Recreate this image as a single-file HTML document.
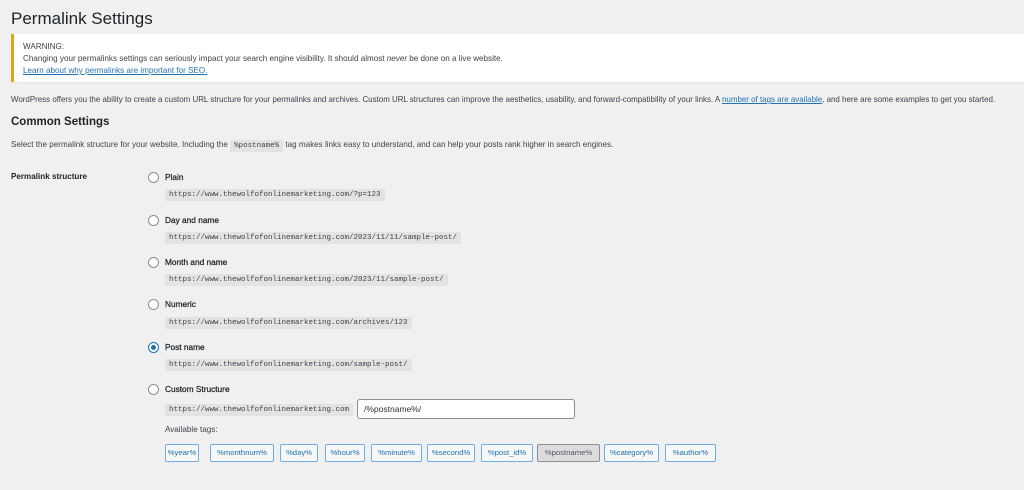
<!DOCTYPE html>
<html><head><style>
body{margin:0;width:1024px;height:490px;background:#f0f0f1;font-family:"Liberation Sans",sans-serif;color:#3c434a;position:relative;overflow:hidden;font-size:8.1px}
.a{position:absolute;white-space:nowrap}
h1{position:absolute;left:11px;top:9px;margin:0;font-size:17px;font-weight:400;color:#1d2327}
.notice{position:absolute;left:11px;top:34px;width:1013px;height:48px;background:#fff;border-left:3px solid #dba617;box-sizing:border-box;box-shadow:0 1px 1px rgba(0,0,0,.06)}
a{color:#2271b1;text-decoration:underline}
code{font-family:"Liberation Mono",monospace;background:#e3e3e4;padding:2px 4px;font-size:7.5px;color:#3c434a}
.r{position:absolute;left:148px;width:9px;height:9px;border:1px solid #8c8f94;border-radius:50%;background:#fff}
.r.on{border-color:#2271b1}
.r.on:after{content:"";position:absolute;left:2px;top:2px;width:5px;height:5px;border-radius:50%;background:#2271b1}
.lab{position:absolute;left:165px;color:#1d2327;font-size:8.3px;-webkit-text-stroke:0.25px #1d2327}
.btn{position:absolute;top:444px;height:18px;border:1px solid #72aee6;background:#f6f7f7;color:#2271b1;box-sizing:border-box;font-size:7.7px;line-height:16px;text-align:center;border-radius:2px}
</style></head><body>
<h1>Permalink Settings</h1>
<div class="notice"></div>
<div class="a" style="left:23px;top:42px;color:#3c434a">WARNING:</div>
<div class="a" style="left:23px;top:54px">Changing your permalinks settings can seriously impact your search engine visibility. It should almost <i>never</i> be done on a live website.</div>
<div class="a" style="left:23px;top:66px"><a>Learn about why permalinks are important for SEO.</a></div>
<div class="a" style="left:11px;top:95px;font-size:7.95px">WordPress offers you the ability to create a custom URL structure for your permalinks and archives. Custom URL structures can improve the aesthetics, usability, and forward-compatibility of your links. A <a>number of tags are available</a>, and here are some examples to get you started.</div>
<div class="a" style="left:11px;top:116px;font-size:11.5px;font-weight:bold;color:#1d2327">Common Settings</div>
<div class="a" style="left:11px;top:140px">Select the permalink structure for your website. Including the <code>%postname%</code> tag makes links easy to understand, and can help your posts rank higher in search engines.</div>
<div class="a" style="left:11px;top:172px;font-weight:bold;color:#1d2327">Permalink structure</div>

<div class="r" style="top:172px"></div><div class="lab a" style="top:172px">Plain</div>
<div class="a" style="left:165px;top:189px"><code>https://www.thewolfofonlinemarketing.com/?p=123</code></div>
<div class="r" style="top:215px"></div><div class="lab a" style="top:215px">Day and name</div>
<div class="a" style="left:165px;top:232px"><code>https://www.thewolfofonlinemarketing.com/2023/11/11/sample-post/</code></div>
<div class="r" style="top:257px"></div><div class="lab a" style="top:257px">Month and name</div>
<div class="a" style="left:165px;top:274px"><code>https://www.thewolfofonlinemarketing.com/2023/11/sample-post/</code></div>
<div class="r" style="top:299px"></div><div class="lab a" style="top:299px">Numeric</div>
<div class="a" style="left:165px;top:317px"><code>https://www.thewolfofonlinemarketing.com/archives/123</code></div>
<div class="r on" style="top:342px"></div><div class="lab a" style="top:342px">Post name</div>
<div class="a" style="left:165px;top:359px"><code>https://www.thewolfofonlinemarketing.com/sample-post/</code></div>
<div class="r" style="top:384px"></div><div class="lab a" style="top:384px">Custom Structure</div>
<div class="a" style="left:165px;top:404px"><code>https://www.thewolfofonlinemarketing.com</code></div>
<div class="a" style="left:357px;top:399px;width:218px;height:20px;background:#fff;border:1px solid #8c8f94;border-radius:3px;box-sizing:border-box;font-size:8.5px;line-height:18px;padding-left:6px;color:#2c3338">/%postname%/</div>
<div class="a" style="left:165px;top:425px">Available tags:</div>

<div class="btn" style="left:165px;width:34px">%year%</div>
<div class="btn" style="left:210px;width:64px">%monthnum%</div>
<div class="btn" style="left:280px;width:38px">%day%</div>
<div class="btn" style="left:325px;width:40px">%hour%</div>
<div class="btn" style="left:371px;width:51px">%minute%</div>
<div class="btn" style="left:427px;width:48px">%second%</div>
<div class="btn" style="left:481px;width:52px">%post_id%</div>
<div class="btn" style="left:537px;width:63px;background:#dcdcde;color:#50575e;border-color:#8c8f94">%postname%</div>
<div class="btn" style="left:604px;width:55px">%category%</div>
<div class="btn" style="left:665px;width:51px">%author%</div>
</body></html>
